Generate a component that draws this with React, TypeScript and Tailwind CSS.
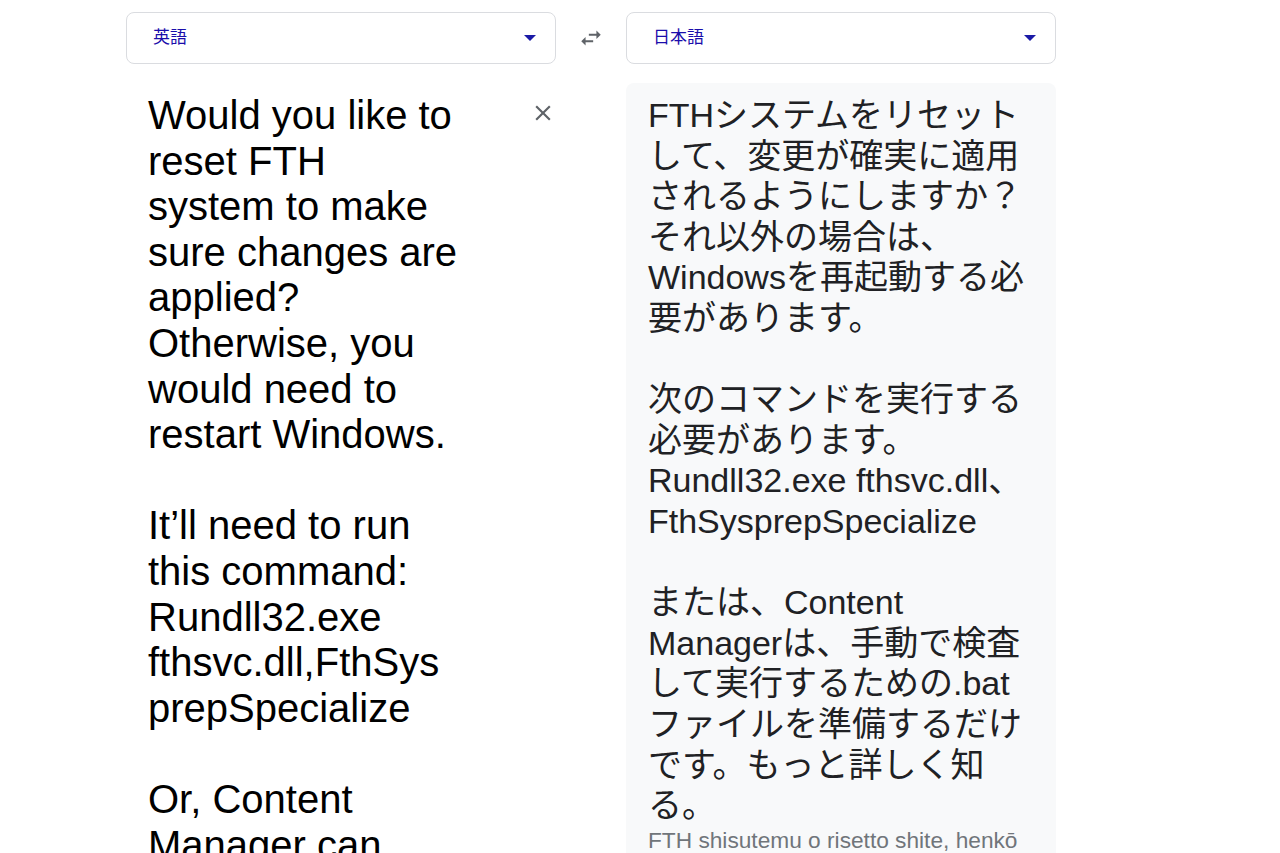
const font = { fontFamily: '"Liberation Sans", Arial, "Noto Sans CJK JP", sans-serif' };

function LangSelect({ label }: { label: string }) {
  return (
    <div className="w-[430px] h-[52px] border border-[#dadce0] rounded-lg bg-white flex items-center justify-between pl-[26px] pr-[18px]">
      <span className="text-[17px] text-[#1a0dab]" style={font}>
        {label}
      </span>
      <svg width="14" height="8" viewBox="0 0 14 8">
        <path d="M1 1h12L7 7z" fill="#1a1aa6" />
      </svg>
    </div>
  );
}

const source = [
  'Would you like to',
  'reset FTH',
  'system to make',
  'sure changes are',
  'applied?',
  'Otherwise, you',
  'would need to',
  'restart Windows.',
  '',
  'It\u2019ll need to run',
  'this command:',
  'Rundll32.exe',
  'fthsvc.dll,FthSys',
  'prepSpecialize',
  '',
  'Or, Content',
  'Manager can',
];

const target = [
  'FTHシステムをリセット',
  'して、変更が確実に適用',
  'されるようにしますか？',
  'それ以外の場合は、',
  'Windowsを再起動する必',
  '要があります。',
  '',
  '次のコマンドを実行する',
  '必要があります。',
  'Rundll32.exe fthsvc.dll、',
  'FthSysprepSpecialize',
  '',
  'または、Content',
  'Managerは、手動で検査',
  'して実行するための.bat',
  'ファイルを準備するだけ',
  'です。もっと詳しく知',
  'る。',
];

export default function App() {
  return (
    <div className="w-[1280px] h-[853px] overflow-hidden bg-white pl-[126px] pt-[12px]" style={font}>
      <div className="flex items-center">
        <LangSelect label="英語" />
        <div className="w-[70px] flex justify-center">
          <svg width="26" height="26" viewBox="0 0 24 24" fill="#5f6368">
            <path d="M6.99 11L3 15l3.99 4v-3H14v-2H6.99v-3zM21 9l-4-4v3H10v2h7v3l4-4z" />
          </svg>
        </div>
        <LangSelect label="日本語" />
      </div>

      <div className="flex mt-[19px]">
        <div className="w-[430px] relative pl-[22px] pt-[10px]">
          <div className="text-[40px] leading-[45.6px] text-black">
            {source.map((l, i) => (
              <div key={i} className="h-[45.6px] whitespace-nowrap">
                {l}
              </div>
            ))}
          </div>
          <button className="absolute right-[-1px] top-[16px] w-[28px] h-[28px] flex items-center justify-center">
            <svg width="26" height="26" viewBox="0 0 24 24" fill="#5f6368">
              <path d="M19 6.41L17.59 5 12 10.59 6.41 5 5 6.41 10.59 12 5 17.59 6.41 19 12 13.41 17.59 19 19 17.59 13.41 12z" />
            </svg>
          </button>
        </div>

        <div className="w-[70px]" />

        <div className="w-[430px] h-[800px] bg-[#f8f9fa] rounded-t-lg pl-[22px] pt-[12px]">
          <div className="text-[34px] leading-[40.6px] text-[#202124]">
            {target.map((l, i) => (
              <div key={i} className="h-[40.6px] whitespace-nowrap">
                {l}
              </div>
            ))}
          </div>
          <div className="text-[22.7px] leading-[26px] text-[#70757a] whitespace-nowrap mt-[1px]">
            FTH shisutemu o risetto shite, henkō
          </div>
        </div>
      </div>
    </div>
  );
}
